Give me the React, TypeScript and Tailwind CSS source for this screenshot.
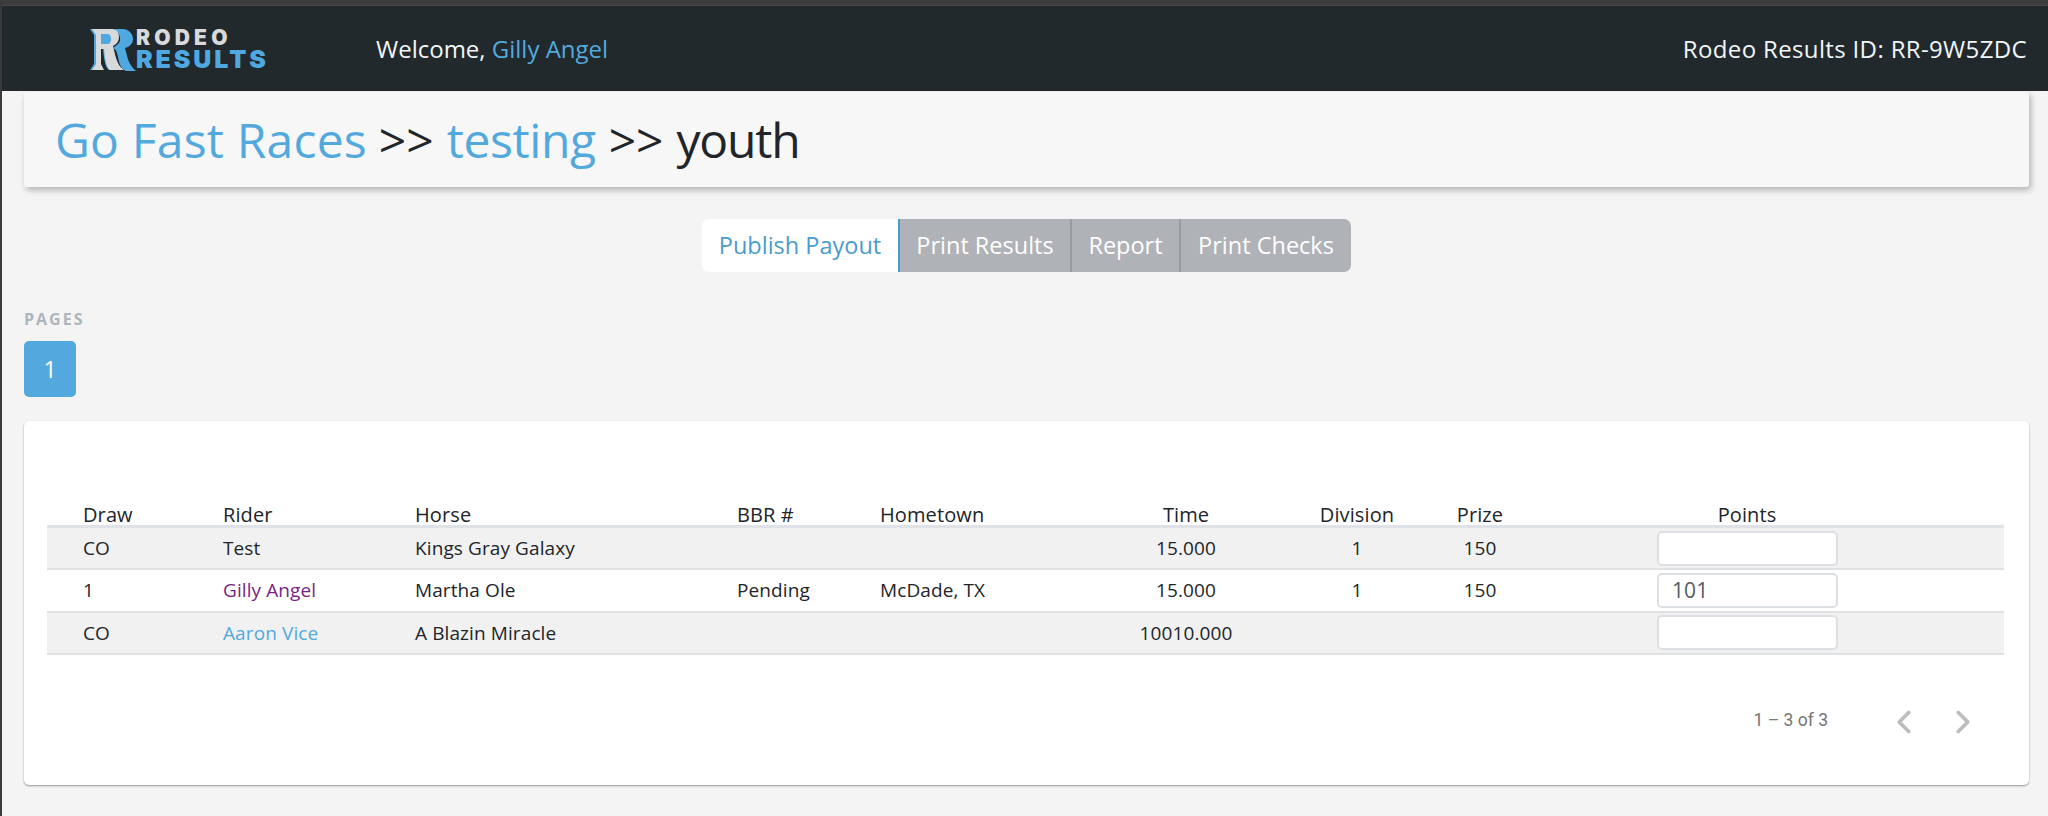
import { ChevronLeft, ChevronRight } from 'lucide-react';

const riders = [
  { draw: 'CO', rider: 'Test', riderColor: 'text-[#212529]', horse: 'Kings Gray Galaxy', bbr: '', hometown: '', time: '15.000', division: '1', prize: '150', points: '', striped: true },
  { draw: '1', rider: 'Gilly Angel', riderColor: 'text-[#7b1f85]', horse: 'Martha Ole', bbr: 'Pending', hometown: 'McDade, TX', time: '15.000', division: '1', prize: '150', points: '101', striped: false },
  { draw: 'CO', rider: 'Aaron Vice', riderColor: 'text-[#53a9de]', horse: 'A Blazin Miracle', bbr: '', hometown: '', time: '10010.000', division: '', prize: '', points: '', striped: true },
];

function Logo() {
  return (
    <div className="flex items-start w-[176px] h-[44px]">
      <svg width="46" height="45" viewBox="0 0 46 45" className="shrink-0">
        <path fill="#4fa8df" d="M24 2h8c7 0 11 5 11 10 0 5-4 8-8 9 2 7 3 17 11 23H36c-5-2-7-8-8-14-1-5-2-8-5-9l6-5c2-3 2-9-5-14z" />
        <path fill="#4fa8df" fillRule="evenodd" d="M0 2h21c5 0 7 4 7 8s-2 7-6 9c2 7 3 19 11 24H19c-3-2-4-7-5-12l-1-9h-3v15l3 6H0l4-6V8z" />
        <path fill="#d8d9da" fillRule="evenodd" d="M2 2h20c5 0 7 4 7 8s-2 7-6 9c2 7 3 19 11 24H20c-3-2-4-7-5-12l-1-9h-3v15l3 6H2l4-6V8zM11 7v10h6c3 0 4-2 4-5s-1-5-4-5z" />
      </svg>
      <div className="font-['Inter',sans-serif] font-black">
        <div className="text-[#d8d9da] text-[21px] tracking-[4.2px] leading-[21px] h-[21px]">RODEO</div>
        <div className="text-[#4fa8df] text-[25px] tracking-[2.9px] leading-[23px]">RESULTS</div>
      </div>
    </div>
  );
}

export default function App() {
  return (
    <div className="min-h-[816px] bg-[#f4f4f4] border-l-2 border-[#3a3a3a] font-['Open_Sans',sans-serif] text-[#212529]">
      <div className="h-[6px] bg-[#3d3d3d] border-b border-[#4a4a4a]" />

      {/* Navbar */}
      <div className="h-[85px] bg-[#21292d] flex items-center pl-[88px] pr-[21px] text-[24px] text-[#f1f6f7]">
        <Logo />
        <div className="ml-[110px]">
          Welcome, <span className="text-[#53a9de]">Gilly Angel</span>
        </div>
        <div className="ml-auto tracking-[0.35px]">Rodeo Results ID: RR-9W5ZDC</div>
      </div>

      <div className="pl-[22px] pr-[19px]">
        {/* Breadcrumb */}
        <div className="mt-[1px] h-[95px] bg-[#f7f7f7] rounded-[3px] shadow-[2px_3px_6px_rgba(0,0,0,0.28)] flex items-center pl-[31px] text-[48px]">
          <span className="text-[#53a9de] tracking-[0.2px]">Go Fast Races</span>
          <span className="ml-[12px]">&gt;&gt;</span>
          <span className="ml-[13px] text-[#53a9de] tracking-[-0.4px]">testing</span>
          <span className="ml-[13px]">&gt;&gt;</span>
          <span className="ml-[13px] tracking-[-1.2px]">youth</span>
        </div>

        {/* Actions */}
        <div className="mt-[32px] flex justify-center">
          <div className="flex h-[53px] text-[23.500px] rounded-[7px] overflow-hidden text-white">
            <button className="w-[198px] bg-white text-[#4a9bcf] border-r-2 border-[#4a9bcf]">Publish Payout</button>
            <button className="w-[172px] bg-[#afb2b6] border-r-2 border-[#989ca1]">Print Results</button>
            <button className="w-[109px] bg-[#afb2b6] border-r-2 border-[#989ca1]">Report</button>
            <button className="w-[170px] bg-[#afb2b6]">Print Checks</button>
          </div>
        </div>

        {/* Pages */}
        <div className="mt-[40px] text-[16px] leading-[14px] font-bold tracking-[2px] text-[#adb5bd]">PAGES</div>
        <button className="mt-[15px] block w-[52px] h-[56px] rounded-[5px] bg-[#53a9de] text-white text-[23px]">1</button>

        {/* Results table */}
        <div className="mt-[24px] h-[364px] bg-white rounded-[5px] shadow-[0_1px_2px_rgba(0,0,0,0.4)] pt-[78px] px-[23px]">
          <table className="w-[1957px] table-fixed border-collapse text-[19px] tracking-[0.1px]">
            <colgroup>
              <col className="w-[140px]" />
              <col className="w-[192px]" />
              <col className="w-[322px]" />
              <col className="w-[143px]" />
              <col className="w-[216px]" />
              <col className="w-[252px]" />
              <col className="w-[90px]" />
              <col className="w-[156px]" />
              <col className="w-[446px]" />
            </colgroup>
            <thead>
              <tr className="border-b-[3px] border-[#dfe2e6] text-[20px] leading-[21px]">
                <th className="pt-[5px] pl-[36px] text-left font-medium">Draw</th>
                <th className="pt-[5px] pl-[36px] text-left font-medium">Rider</th>
                <th className="pt-[5px] pl-[36px] text-left font-medium">Horse</th>
                <th className="pt-[5px] pl-[36px] text-left font-medium">BBR #</th>
                <th className="pt-[5px] pl-[36px] text-left font-medium">Hometown</th>
                <th className="pt-[5px] text-center font-medium">Time</th>
                <th className="pt-[5px] text-center font-medium">Division</th>
                <th className="pt-[5px] text-center font-medium">Prize</th>
                <th className="pt-[5px] pr-[68px] text-center font-medium">Points</th>
              </tr>
            </thead>
            <tbody>
              {riders.map((r, idx) => (
                <tr key={idx} className={`h-[42.5px] border-b-2 border-[#dfe1e3] ${r.striped ? 'bg-[#f1f1f1]' : 'bg-white'}`}>
                  <td className="pl-[36px]">{r.draw}</td>
                  <td className={`pl-[36px] ${r.riderColor}`}>{r.rider}</td>
                  <td className="pl-[36px]">{r.horse}</td>
                  <td className="pl-[36px]">{r.bbr}</td>
                  <td className="pl-[36px]">{r.hometown}</td>
                  <td className="text-center">{r.time}</td>
                  <td className="text-center">{r.division}</td>
                  <td className="text-center">{r.prize}</td>
                  <td className="pl-[99px]">
                    <input
                      readOnly
                      value={r.points}
                      className="block w-[181px] h-[35px] px-[13px] bg-white border-2 border-[#dcdfe3] rounded-[5px] text-[21px] text-[#555b62] outline-none"
                    />
                  </td>
                </tr>
              ))}
            </tbody>
          </table>

          {/* Pagination */}
          <div className="mt-[47px] flex items-center justify-end pr-[24px] h-[40px] font-['Roboto',sans-serif] text-[17.500px] text-[#757575]">
            <span className="mr-[57px] -mt-[3px]">1 – 3 of 3</span>
            <ChevronLeft size={38} strokeWidth={2.4} className="text-[#bdbdbd]" />
            <ChevronRight size={38} strokeWidth={2.4} className="ml-[21px] text-[#bdbdbd]" />
          </div>
        </div>
      </div>
    </div>
  );
}
